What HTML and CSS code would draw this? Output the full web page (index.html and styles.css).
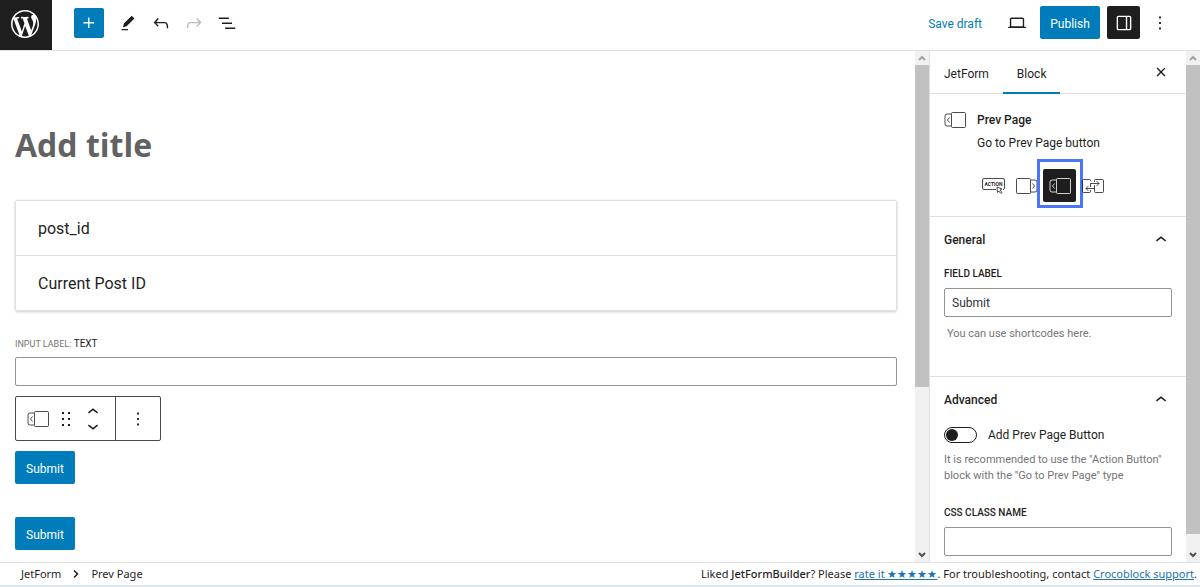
FILE: index.html
```html
<!DOCTYPE html>
<html lang="en">
<head>
    <meta charset="UTF-8">
    <meta name="viewport" content="width=device-width, initial-scale=1">
    <title>Add title - JetForm</title>
    <link rel="stylesheet" href="styles.css">
</head>
<body>

    <!-- shared icons -->
    <svg class="sprite" aria-hidden="true">
        <symbol id="icon-prev-page" viewBox="0 0 22 16">
            <path d="M7 2H3a2 2 0 0 0-2 2v8a2 2 0 0 0 2 2h4M5.5 5.500 3.500 8l2 2.500" fill="none" stroke="currentColor" stroke-width=".8"/>
            <rect x="7.500" y=".5" width="14" height="15" rx="1" fill="none" stroke="currentColor" stroke-width=".8"/>
        </symbol>
        <symbol id="icon-more" viewBox="0 0 24 24">
            <path d="M13 19h-2v-2h2v2zm0-6h-2v-2h2v2zm0-6h-2V5h2v2z"/>
        </symbol>
        <symbol id="icon-up" viewBox="0 0 24 24">
            <path d="M6.5 12.400L12 8l5.500 4.400-.9 1.200L12 10l-4.500 3.600-1-1.200z"/>
        </symbol>
        <symbol id="icon-down" viewBox="0 0 24 24">
            <path d="M17.5 11.600L12 16l-5.500-4.400.9-1.200L12 14l4.500-3.600 1 1.200z"/>
        </symbol>
        <symbol id="arrow-up" viewBox="0 0 14 14">
            <path d="M4 9l3-3 3 3" fill="none" stroke="currentColor" stroke-width="2"/>
        </symbol>
        <symbol id="arrow-down" viewBox="0 0 14 14">
            <path d="M4 5l3 3 3-3" fill="none" stroke="currentColor" stroke-width="2"/>
        </symbol>
    </svg>

    <header class="header">
        <a class="logo" href="#" aria-label="View posts">
            <svg viewBox="0 0 20 20"><path d="M20 10c0-5.51-4.490-10-10-10C4.480 0 0 4.490 0 10c0 5.520 4.480 10 10 10 5.510 0 10-4.480 10-10zM7.780 15.370L4.370 6.220c.55-.02 1.170-.08 1.170-.08.5-.06.44-1.130-.06-1.110 0 0-1.450.11-2.370.11-.18 0-.37 0-.58-.01C4.120 2.690 6.870 1.110 10 1.110c2.330 0 4.450.87 6.050 2.340-.68-.11-1.650.39-1.650 1.580 0 .74.45 1.360.9 2.100.35.61.55 1.360.55 2.460 0 1.490-1.400 5-1.400 5l-3.030-8.370c.54-.02.82-.17.82-.17.5-.05.44-1.250-.06-1.220 0 0-1.440.12-2.380.12-.87 0-2.330-.12-2.330-.12-.5-.03-.56 1.200-.06 1.220l.92.08 1.260 3.410zM17.410 10c.24-.64.74-1.870.43-4.250.7 1.290 1.050 2.710 1.050 4.250 0 3.290-1.730 6.240-4.400 7.780.97-2.590 1.940-5.200 2.920-7.780zM6.100 18.090C3.120 16.650 1.110 13.530 1.110 10c0-1.300.23-2.480.72-3.590C3.250 10.300 4.670 14.200 6.100 18.090zm4.030-6.630l2.580 6.980c-.86.29-1.760.45-2.710.45-.79 0-1.570-.11-2.290-.33.81-2.380 1.620-4.740 2.420-7.100z"/></svg>
        </a>
        <div class="header-tools">
            <button class="btn-add" type="button" aria-label="Toggle block inserter">
                <svg class="icon" viewBox="0 0 24 24"><path d="M11 12.500V17.500H12.500V12.500H17.500V11H12.500V6H11V11H6V12.500H11Z"/></svg>
            </button>
            <button class="btn-icon" type="button" aria-label="Tools">
                <svg class="icon" viewBox="0 0 24 24"><path d="m19 7-3-3-8.500 8.500-1 4 4-1L19 7Zm-7 11.500H5V20h7v-1.500Z"/></svg>
            </button>
            <button class="btn-icon" type="button" aria-label="Undo">
                <svg class="icon" viewBox="0 0 24 24"><path d="M18.3 11.700c-.6-.6-1.400-.9-2.300-.9H6.700l2.900-3.300-1.100-1-4.500 5L8.500 16l1-1-2.700-2.700H16c.5 0 .9.2 1.300.5 1 1 1 3.400 1 4.500v.3h1.500v-.2c0-1.500 0-4.300-1.500-5.700z"/></svg>
            </button>
            <button class="btn-icon" type="button" aria-label="Redo" disabled>
                <svg class="icon" viewBox="0 0 24 24"><path d="M15.6 6.500l-1.100 1 2.900 3.300H8c-.9 0-1.700.3-2.300.9-1.400 1.500-1.400 4.200-1.400 5.600v.2h1.500v-.3c0-1.100 0-3.500 1-4.500.3-.3.7-.5 1.300-.5h9.200L14.500 15l1.100 1.100 4.600-4.600-4.600-5z"/></svg>
            </button>
            <button class="btn-icon" type="button" aria-label="Document overview">
                <svg class="icon" viewBox="0 0 24 24"><path d="M3 6h11v1.500H3V6Zm3.500 5.500h11V13h-11v-1.500ZM21 17H10v1.500h11V17Z"/></svg>
            </button>
        </div>
        <div class="header-settings">
            <button class="btn-link" type="button">Save draft</button>
            <button class="btn-icon" type="button" aria-label="Preview">
                <svg class="icon" viewBox="0 0 24 24"><path d="M20.5 16h-.7V8c0-1.100-.9-2-2-2H6.200c-1.100 0-2 .9-2 2v8h-.7c-.8 0-1.500.7-1.500 1.500h20c0-.8-.7-1.500-1.500-1.500zM5.700 8c0-.3.2-.5.5-.5h11.600c.3 0 .5.2.5.5v7.600H5.700V8z"/></svg>
            </button>
            <button class="btn-primary" type="button">Publish</button>
            <button class="btn-icon active" type="button" aria-label="Settings">
                <svg class="icon" viewBox="0 0 24 24"><path d="M18 4H6c-1.100 0-2 .9-2 2v12c0 1.100.9 2 2 2h12c1.100 0 2-.9 2-2V6c0-1.100-.9-2-2-2zm-4 14.500H6c-.3 0-.5-.2-.5-.5V6c0-.3.2-.5.5-.5h8v13zm4.500-.5c0 .3-.2.5-.5.5h-2.500v-13H18c.3 0 .5.2.5.5v12z"/></svg>
            </button>
            <button class="btn-icon btn-options" type="button" aria-label="Options">
                <svg class="icon"><use href="#icon-more"/></svg>
            </button>
        </div>
    </header>

    <div class="body">
        <main class="editor">
            <div class="canvas">
                <h1 class="post-title">Add title</h1>

                <div class="hidden-field">
                    <div class="hidden-field-row">post_id</div>
                    <div class="hidden-field-row">Current Post ID</div>
                </div>

                <div class="text-field">
                    <label class="text-field-label" for="text-input"><span>INPUT LABEL:</span> TEXT</label>
                    <input class="input" type="text" id="text-input">
                </div>

                <div class="block-toolbar">
                    <div class="toolbar-group">
                        <button class="toolbar-btn" type="button" aria-label="Prev Page">
                            <svg class="icon-page"><use href="#icon-prev-page"/></svg>
                        </button>
                        <button class="toolbar-btn drag" type="button" aria-label="Drag">
                            <svg class="icon-drag" viewBox="0 0 8 14"><path d="M0 0h2v2H0zM6 0h2v2H6zM0 6h2v2H0zM6 6h2v2H6zM0 12h2v2H0zM6 12h2v2H6z"/></svg>
                        </button>
                        <div class="movers">
                            <button type="button" aria-label="Move up"><svg class="icon"><use href="#icon-up"/></svg></button>
                            <button type="button" aria-label="Move down"><svg class="icon"><use href="#icon-down"/></svg></button>
                        </div>
                    </div>
                    <div class="toolbar-group options">
                        <button class="toolbar-btn" type="button" aria-label="Options">
                            <svg class="icon"><use href="#icon-more"/></svg>
                        </button>
                    </div>
                </div>

                <button class="btn-primary submit" type="button">Submit</button>
                <button class="btn-primary submit" type="button">Submit</button>
            </div>
            <div class="scrollbar">
                <svg class="arrow off"><use href="#arrow-up"/></svg>
                <div class="track"><div class="thumb thumb-editor"></div></div>
                <svg class="arrow"><use href="#arrow-down"/></svg>
            </div>
        </main>

        <aside class="sidebar">
            <div class="panel">
                <div class="tabs">
                    <button class="tab" type="button">JetForm</button>
                    <button class="tab current" type="button">Block</button>
                    <button class="btn-icon close" type="button" aria-label="Close settings">
                        <svg class="icon" viewBox="0 0 24 24"><path d="M12 13.060l3.712 3.713 1.061-1.060L13.061 12l3.712-3.712-1.060-1.060L12 10.938 8.288 7.227l-1.061 1.060L10.939 12l-3.712 3.712 1.060 1.061L12 13.061z"/></svg>
                    </button>
                </div>

                <section class="block-card">
                    <svg class="icon-page"><use href="#icon-prev-page"/></svg>
                    <div class="card-content">
                        <h2>Prev Page</h2>
                        <p>Go to Prev Page button</p>
                        <div class="variations">
                            <button class="variation" type="button" aria-label="Action Button">
                                <svg class="icon-action" viewBox="0 0 23 16">
                                    <path d="M14 11.500H2A1.500 1.500 0 0 1 .5 10V2A1.500 1.500 0 0 1 2 .5h19A1.500 1.500 0 0 1 22.500 2v8a1.500 1.500 0 0 1-1.500 1.500" fill="none" stroke="currentColor" stroke-width=".8"/>
                                    <text x="11.500" y="8" text-anchor="middle">ACTION</text>
                                    <path d="M15 9l5 2-2 1 2 2.500-1.200 1-2-2.500-1.300 1.500z" fill="#fff" stroke="currentColor" stroke-width=".8"/>
                                </svg>
                            </button>
                            <button class="variation" type="button" aria-label="Next Page">
                                <svg class="icon-page" viewBox="0 0 22 16">
                                    <rect x=".5" y=".5" width="14" height="15" rx="1" fill="none" stroke="currentColor" stroke-width=".8"/>
                                    <path d="M15 2h4a2 2 0 0 1 2 2v8a2 2 0 0 1-2 2h-4M16.500 5.500l2 2.500-2 2.500" fill="none" stroke="currentColor" stroke-width=".8"/>
                                </svg>
                            </button>
                            <button class="variation selected" type="button" aria-label="Prev Page">
                                <svg class="icon-page"><use href="#icon-prev-page"/></svg>
                            </button>
                            <button class="variation" type="button" aria-label="Switch Page">
                                <svg class="icon-page" viewBox="0 0 22 16">
                                    <path d="M8.500 3V2.500A1 1 0 0 0 7.500 1.500H1.500A1 1 0 0 0 .5 2.500v11a1 1 0 0 0 1 1h6a1 1 0 0 0 1-1V12M12.500 4V2.500a1 1 0 0 1 1-1h7a1 1 0 0 1 1 1v11a1 1 0 0 1-1 1h-7a1 1 0 0 1-1-1V7M8.500 9V5.500H17M14.500 3L17 5.500 14.500 8M12.500 10.500H4M6.500 8L4 10.500 6.500 13" fill="none" stroke="currentColor" stroke-width=".8"/>
                                </svg>
                            </button>
                        </div>
                    </div>
                </section>

                <section class="group general">
                    <button class="group-title" type="button">General <svg class="icon"><use href="#icon-up"/></svg></button>
                    <label class="label" for="field-label">FIELD LABEL</label>
                    <input class="input" type="text" id="field-label" value="Submit">
                    <p class="help indent">You can use shortcodes here.</p>
                </section>

                <section class="group">
                    <button class="group-title" type="button">Advanced <svg class="icon"><use href="#icon-up"/></svg></button>
                    <div class="toggle-row">
                        <input class="toggle" type="checkbox" id="add-prev">
                        <label for="add-prev">Add Prev Page Button</label>
                    </div>
                    <p class="help">It is recommended to use the "Action Button" block with the "Go to Prev Page" type</p>
                    <label class="label css-label" for="css-class">CSS CLASS NAME</label>
                    <input class="input" type="text" id="css-class">
                </section>
            </div>
            <div class="scrollbar">
                <svg class="arrow off"><use href="#arrow-up"/></svg>
                <div class="track"><div class="thumb thumb-sidebar"></div></div>
                <svg class="arrow"><use href="#arrow-down"/></svg>
            </div>
        </aside>
    </div>

    <footer class="footer">
        <nav class="breadcrumb" aria-label="Block breadcrumb">
            <button type="button">JetForm</button>
            <svg class="crumb-arrow" viewBox="0 0 6 8"><path d="M1 .5L4.500 4 1 7.500" fill="none" stroke="currentColor" stroke-width="1.500"/></svg>
            <span>Prev Page</span>
        </nav>
        <p>Liked <b>JetFormBuilder</b>? Please <a href="#">rate it ★★★★★</a>. For troubleshooting, contact <a href="#">Crocoblock support</a>.</p>
    </footer>

</body>
</html>
```

FILE: styles.css
```css
* {
    box-sizing: border-box;
}

body {
    display: flex;
    flex-direction: column;
    height: 100vh;
    margin: 0;
    border-bottom: 2px solid #dfe8f0;
    background: #fff;
    color: #1e1e1e;
    font-family: Roboto, "Open Sans", sans-serif;
    font-size: 12px;
    line-height: 16px;
    overflow: hidden;
}

h1, h2, p {
    margin: 0;
}

button {
    padding: 0;
    border: none;
    background: none;
    color: inherit;
    font: inherit;
    cursor: pointer;
}

svg {
    display: block;
    flex-shrink: 0;
    fill: currentColor;
}

a {
    color: #2271b1;
}

.sprite {
    position: absolute;
    width: 0;
    height: 0;
}

.icon {
    width: 22px;
    height: 22px;
}

.icon-page {
    width: 22px;
    height: 16px;
}

.icon-action {
    width: 23px;
    height: 16px;
}

.icon-action text {
    font-size: 5px;
    font-weight: 700;
}

/* header */
.header {
    display: flex;
    align-items: center;
    flex-shrink: 0;
    height: 51px;
    border-bottom: 1px solid #e0e0e0;
}

.logo {
    display: flex;
    align-items: center;
    justify-content: center;
    align-self: stretch;
    width: 52px;
    padding: 0 2px 3px 0;
    background: #1e1e1e;
    color: #fff;
}

.logo svg {
    width: 28px;
    height: 28px;
}

.header-tools {
    display: flex;
    align-items: center;
    flex: 1;
    margin-left: 22px;
    padding-bottom: 5px;
}

.btn-icon,
.btn-add {
    display: flex;
    align-items: center;
    justify-content: center;
    width: 33px;
    height: 33px;
    border-radius: 2px;
}

.btn-icon:disabled {
    color: #bbb;
}

.btn-icon.active {
    background: #1e1e1e;
    color: #fff;
}

.btn-add {
    width: 30px;
    height: 30px;
    margin-right: 7px;
    background: #007cba;
    color: #fff;
}

.header-settings {
    display: flex;
    align-items: center;
    gap: 7px;
    padding: 0 27px 5px 0;
}

.btn-icon.btn-options {
    width: 26px;
}

.btn-link {
    margin-right: 11px;
    padding-top: 2px;
    color: #007cba;
}

.btn-primary {
    min-width: 60px;
    height: 33px;
    padding: 2px 8px 0;
    border-radius: 2px;
    background: #007cba;
    color: #fff;
}

/* editor */
.body {
    display: flex;
    flex: 1;
    min-height: 0;
}

.editor {
    display: flex;
    flex: 1;
    min-width: 0;
}

.canvas {
    flex: 1;
    padding: 71px 18px 0 15px;
    overflow: hidden;
}

.post-title {
    color: #626262;
    font-family: "Open Sans", "Noto Sans", sans-serif;
    font-size: 32px;
    line-height: 46px;
}

.hidden-field {
    margin-top: 32px;
    border: 1px solid #e0e0e0;
    border-radius: 2px;
    box-shadow: 0 1px 3px rgba(0, 0, 0, 0.2);
}

.hidden-field-row {
    padding: 16px 22px 14px;
    font-size: 16px;
    line-height: 24px;
}

.hidden-field-row + .hidden-field-row {
    border-top: 1px solid #e0e0e0;
}

.text-field {
    margin-top: 25px;
}

.text-field-label {
    display: block;
    margin-bottom: 5px;
    font-size: 10px;
}

.text-field-label span {
    color: #757575;
    font-size: 9px;
}

.input {
    display: block;
    width: 100%;
    height: 29px;
    padding: 0 7px;
    border: 1px solid #949494;
    border-radius: 2px;
    background: #fff;
    color: #2c3338;
    font: inherit;
}

.block-toolbar {
    display: inline-flex;
    height: 45px;
    margin-top: 10px;
    border: 1px solid #4a4a4a;
    border-radius: 2px;
}

.toolbar-group {
    display: flex;
    align-items: center;
    width: 100px;
    padding-left: 11px;
    border-right: 1px solid #4a4a4a;
}

.toolbar-group.options {
    justify-content: center;
    width: 44px;
    padding: 0;
    border: none;
}

.toolbar-btn.drag {
    margin: 0 12px 0 13px;
}

.icon-drag {
    width: 8px;
    height: 14px;
}

.movers button {
    display: block;
    height: 14px;
}

.movers .icon {
    margin-top: -4px;
}

.submit {
    display: block;
    margin: 10px 0 33px;
}

/* scrollbars */
.scrollbar {
    display: flex;
    flex-direction: column;
    width: 14px;
    background: #f1f1f1;
    color: #505050;
}

.arrow {
    width: 14px;
    height: 14px;
}

.arrow.off {
    color: #a3a3a3;
}

.track {
    flex: 1;
}

.thumb {
    background: #c1c1c1;
}

.thumb-editor {
    height: calc(200% / 3);
}

.thumb-sidebar {
    height: 97%;
}

/* sidebar */
.sidebar {
    display: flex;
    width: 271px;
    border-left: 1px solid #e0e0e0;
}

.panel {
    flex: 1;
    overflow: hidden;
}

.tabs {
    display: flex;
    height: 43px;
    border-bottom: 1px solid #e0e0e0;
}

.tab {
    height: 43px;
    padding: 2px 14px 0;
}

.tab.current {
    border-bottom: 2px solid #007cba;
    padding-top: 4px;
}

.tabs .close {
    align-self: center;
    margin: 0 9px 0 auto;
}

.block-card {
    display: flex;
    gap: 11px;
    padding: 18px 14px 14px;
    border-bottom: 1px solid #e0e0e0;
}

.block-card h2 {
    font-size: 12px;
    font-weight: 500;
    line-height: 16px;
}

.block-card p {
    margin-top: 7px;
}

.variations {
    display: flex;
    margin-top: 18px;
}

.variation {
    position: relative;
    display: flex;
    align-items: center;
    justify-content: center;
    width: 33px;
    height: 33px;
}

.variation.selected {
    border-radius: 2px;
    background: #1e1e1e;
    color: #fff;
}

/* frame around the chosen variation */
.variation.selected::after {
    content: "";
    position: absolute;
    inset: -10px -7px -6px -6px;
    border: 3px solid #4a76f5;
}

.group {
    padding: 0 14px 14px;
}

.general {
    height: 160px;
    border-bottom: 1px solid #e0e0e0;
}

.group-title {
    display: flex;
    align-items: center;
    justify-content: space-between;
    width: 100%;
    height: 46px;
    font-weight: 500;
}

.label {
    display: block;
    margin: 3px 0 6px;
    font-size: 10px;
    font-weight: 500;
}

.css-label {
    margin-top: 21px;
}

.help {
    margin-top: 9px;
    color: #757575;
    font-size: 11px;
}

.indent {
    padding-left: 3px;
}

.toggle-row {
    display: flex;
    align-items: center;
    gap: 11px;
    margin-top: 4px;
}

.toggle {
    display: flex;
    align-items: center;
    appearance: none;
    width: 33px;
    height: 16px;
    margin: 0;
    padding: 0 1px;
    border: 1px solid #1e1e1e;
    border-radius: 8px;
}

.toggle::before {
    content: "";
    width: 12px;
    height: 12px;
    border-radius: 50%;
    background: #1e1e1e;
}

.toggle:checked {
    justify-content: flex-end;
}

/* footer */
.footer {
    display: flex;
    align-items: center;
    justify-content: space-between;
    flex-shrink: 0;
    height: 23px;
    padding: 0 3px 0 21px;
    border-top: 1px solid #e0e0e0;
    font-family: "Noto Sans", "Open Sans", sans-serif;
    font-size: 11px;
}

.footer b {
    font-weight: 500;
}

.breadcrumb {
    display: flex;
    align-items: center;
    gap: 12px;
}

.crumb-arrow {
    width: 6px;
    height: 8px;
}
```
